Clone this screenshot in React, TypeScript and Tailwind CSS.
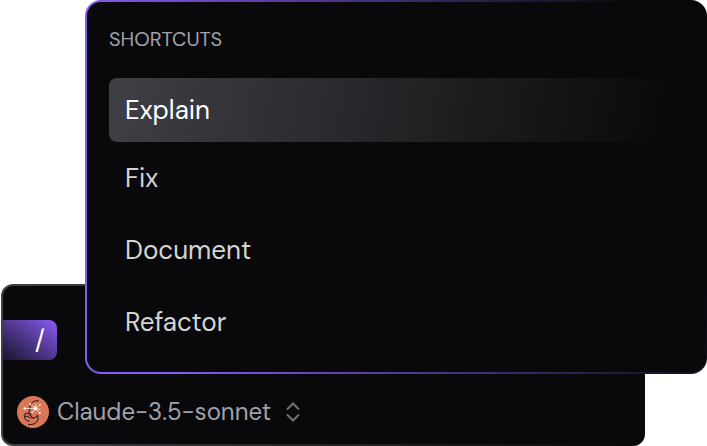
const shortcuts = ["Fix", "Document", "Refactor"];

function ModelLogo() {
  return (
    <svg viewBox="0 0 32 32" className="size-8 shrink-0" fill="none" aria-hidden="true">
      <circle cx="16" cy="16" r="16" fill="#d97757" />
      <path
        d="M21.500 5c-3-.8-5.500.2-7 2.500-1.500 2-2 4-1.500 5.500L11.500 16.500l2 1c0 2 .5 3 2 4M20.500 19c1 2.500.8 5-1 7-2 2.300-5 3-8 2.500M14.500 22c2.500.5 4-.5 5.500-2M8 18c2-1.500 4-.5 6 2.500M7.500 20.500c2-1 4 0 5.500 1.500M8 18c-1 1-1 2-.5 2.500s0 2 1 2.500c0 1.500 1.500 2 3.500 2"
        stroke="#15100e"
        strokeWidth="1"
        strokeLinecap="round"
        strokeLinejoin="round"
      />
      <path
        d="M18.300 12.500 8 12.500M18.300 12.500 13.300 8M18.300 12.500l.5-5M18.300 12.500 23 8.500M18.300 12.500l5 1M18.300 12.500l4.500 4.500M18.300 12.500l-3 4"
        stroke="#fff"
        strokeWidth="0.700"
      />
      <g fill="#fff">
        <circle cx="18.300" cy="12.500" r="1.900" />
        <circle cx="7.800" cy="12.500" r="1.200" />
        <circle cx="13.200" cy="8" r="1" />
        <circle cx="23" cy="8.500" r="0.800" />
        <circle cx="22.800" cy="17" r="1.100" />
        <circle cx="15.300" cy="16.500" r="0.800" />
      </g>
    </svg>
  );
}

function ShortcutsMenu() {
  return (
    <section
      aria-labelledby="shortcuts-title"
      className="relative z-10 ml-[85px] rounded-2xl bg-linear-[75deg,#855cf5_12%,#09090b_90%] p-0.5"
    >
      <div className="rounded-[14px] bg-[#09090b] px-[22px] pt-[22px] pb-[18px]">
        <h2 id="shortcuts-title" className="text-xl leading-[30px] text-[#a1a1aa]">
          SHORTCUTS
        </h2>
        <div className="mt-6 flex flex-col gap-1">
          <button
            type="button"
            className="h-16 rounded-lg bg-linear-[100deg,#3f3f46,#2d2c31_35%,#1b1b1d_65%,#09090b_97%] px-4 text-left text-[26px] text-white"
          >
            Explain
          </button>
          <div className="flex flex-col gap-2">
            {shortcuts.map((name) => (
              <button
                key={name}
                type="button"
                className="h-16 rounded-lg px-4 text-left text-[26px] text-[#d4d4d4]"
              >
                {name}
              </button>
            ))}
          </div>
        </div>
      </div>
    </section>
  );
}

function Composer() {
  return (
    <section className="-mt-[90px] mr-[62px] ml-px rounded-xl bg-linear-to-r from-[#3f3f46] to-[#09090b] p-0.5">
      <div className="flex flex-col items-start gap-9 rounded-[10px] bg-[#09090b] pt-[34px] pb-4">
        <span className="flex h-10 w-[54px] items-center justify-end rounded-r-lg bg-linear-to-tr from-[#1b1430] to-[#8b5cf6] pr-3 text-[26px] text-white">
          /
        </span>
        <div className="flex items-center gap-2 pl-3.5">
          <ModelLogo />
          <div className="relative flex items-center">
            <select
              aria-label="Model"
              className="h-8 w-[243px] appearance-none bg-transparent text-2xl leading-8 text-[#a1a1aa]"
            >
              <option>Claude-3.5-sonnet</option>
            </select>
            <svg
              viewBox="0 0 14 20"
              className="pointer-events-none absolute right-0 h-5 w-3.5"
              fill="none"
              stroke="#71717a"
              strokeWidth="2"
              aria-hidden="true"
            >
              <path d="m1 7.500 6-6 6 6M1 12.500l6 6 6-6" />
            </svg>
          </div>
        </div>
      </div>
    </section>
  );
}

export default function App() {
  return (
    <main className="bg-white font-['DM_Sans',Inter,sans-serif]">
      <ShortcutsMenu />
      <Composer />
    </main>
  );
}
